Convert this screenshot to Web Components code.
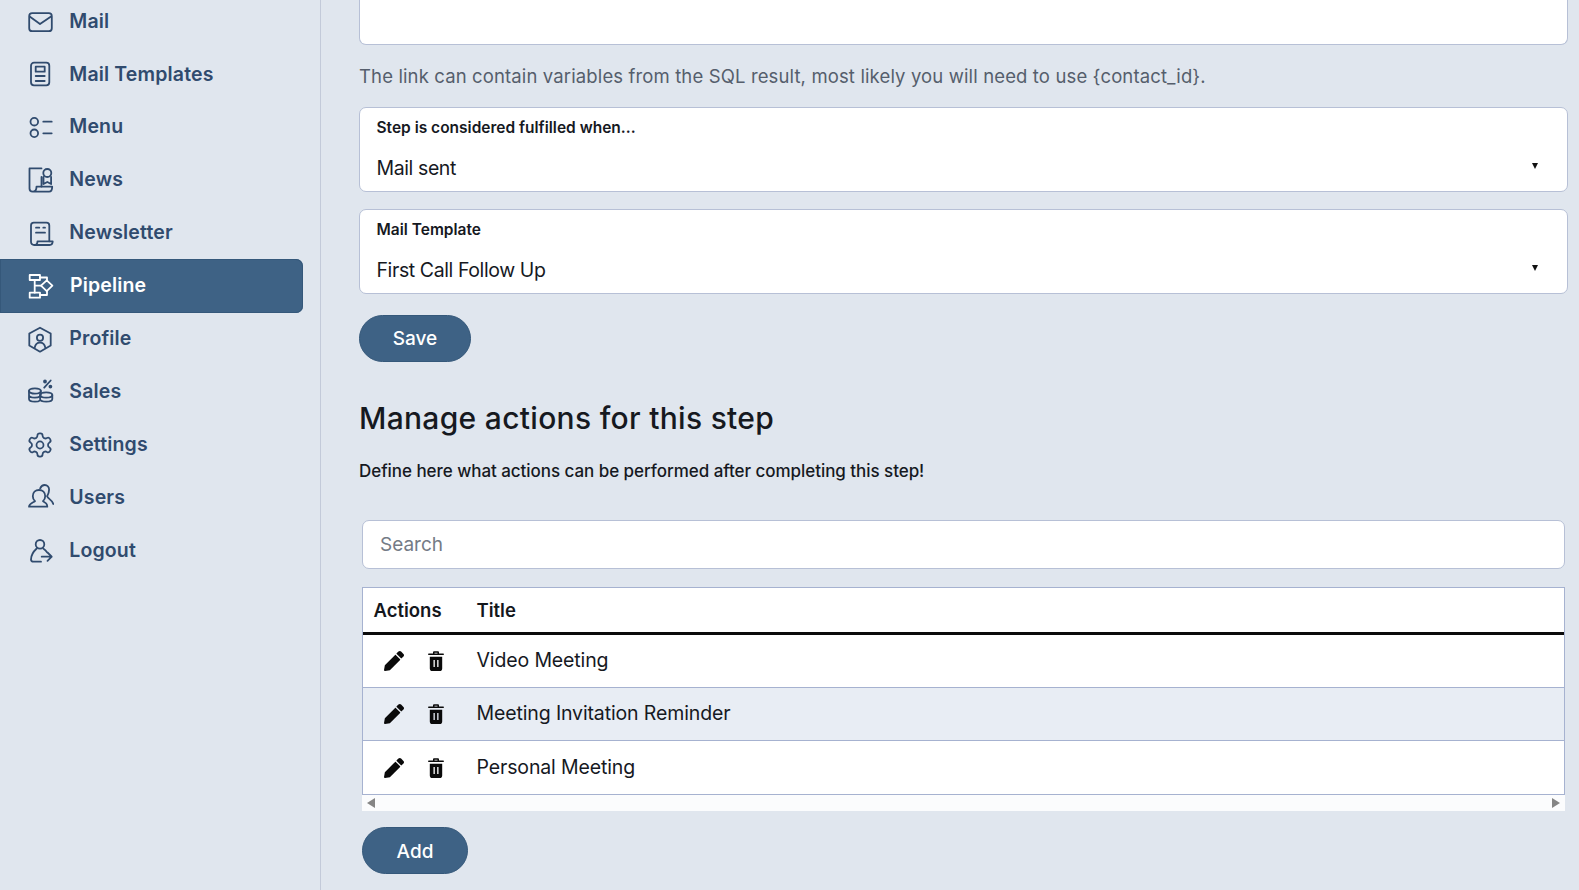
<!DOCTYPE html>
<html lang="en"><head><meta charset="utf-8"><title>Pipeline</title>
<style>
html,body{margin:0;height:890px;overflow:hidden;background:#e0e6ee;font-family:Inter,"Noto Sans",sans-serif}
app-shell{height:890px}
</style></head><body>
<app-shell>
  <app-sidebar slot="side">
    <nav-item icon="mail">Mail</nav-item>
    <nav-item icon="templates">Mail Templates</nav-item>
    <nav-item icon="menu">Menu</nav-item>
    <nav-item icon="news">News</nav-item>
    <nav-item icon="newsletter">Newsletter</nav-item>
    <nav-item icon="pipeline" active>Pipeline</nav-item>
    <nav-item icon="profile">Profile</nav-item>
    <nav-item icon="sales">Sales</nav-item>
    <nav-item icon="settings">Settings</nav-item>
    <nav-item icon="users">Users</nav-item>
    <nav-item icon="logout">Logout</nav-item>
  </app-sidebar>
  <step-form>
    <text-box></text-box>
    <help-text>The link can contain variables from the SQL result, most likely you will need to use {contact_id}.</help-text>
    <select-field label="Step is considered fulfilled when...">Mail sent</select-field>
    <select-field label="Mail Template" style="margin-top:17.5px">First Call Follow Up</select-field>
    <pill-button style="margin-top:21px;width:112px">Save</pill-button>
    <section-head heading="Manage actions for this step">Define here what actions can be performed after completing this step!</section-head>
    <search-box>Search</search-box>
    <actions-table>
      <action-row>Video Meeting</action-row>
      <action-row alt>Meeting Invitation Reminder</action-row>
      <action-row>Personal Meeting</action-row>
    </actions-table>
    <pill-button style="margin:15.5px 0 0 3px;width:106px">Add</pill-button>
  </step-form>
</app-shell>
<script>
const ICONS={
mail:'<rect x="3.2" y="6.2" width="22.6" height="18" rx="3"/><path d="M4 9.7l10 7.3 10.7-7.3"/>',
templates:'<rect x="5" y="2.7" width="18.3" height="22.6" rx="3"/><rect x="9.7" y="6.7" width="9" height="5"/><path d="M9.7 16h9M9.7 21h9"/>',
menu:'<circle cx="8.3" cy="8.7" r="3.8"/><circle cx="8.3" cy="20.3" r="3.8"/><path d="M17.3 8.7h8.4M17.3 20.3h8.4"/>',
news:'<path d="M15.500 2.400H3.500V22.500c0 2 1.200 3.200 3.200 3.200h16.300c2 0 3.200-1.500 3.200-5H10.500c0 3.500-1.500 5-3.800 5"/><circle cx="21.300" cy="7" r="4"/><path d="M17.500 11v7l3.800-2 3.800 2v-7M15.500 11v9.500"/>',
newsletter:'<path d="M8.500 26c-2.200 0-3.500-1.300-3.500-3.200V6.500c0-1.700 1-2.800 2.800-2.800h12.700c1.800 0 2.800 1 2.800 2.800v15.800"/><path d="M8.500 26c2 0 3-1.500 3-3.700h15.200c0 2.400-1.200 3.700-3.200 3.700z"/><path d="M10 8.700h3.300M17.300 8.700H19M10 13.700h9"/>',
pipeline:'<rect x="3.700" y="3" width="10.300" height="5"/><rect x="3.700" y="20.700" width="10.300" height="5"/><path d="M14 5.500h7v3M8.700 8v12.700M8.700 13.700h6M14 23h7v-3.700"/><path d="M20.700 8.300l5.700 5.400-5.700 5.400-5.700-5.400z"/>',
profile:'<path d="M14 2.700l10.700 5.800v12L14 26.700 3.300 20.500v-12z"/><circle cx="14" cy="12.700" r="3.100"/><path d="M8.700 22.600c.6-3.400 2.700-5 5.300-5s4.700 1.600 5.300 5"/>',
sales:'<ellipse cx="8.900" cy="13" rx="5.900" ry="2.700"/><path d="M3 13v8c0 1.500 2.600 2.700 5.900 2.700 2.200 0 4.200-.5 5.200-1.400M3 17c0 1.500 2.600 2.700 5.900 2.700 2 0 3.800-.4 5-1.200M14.800 13v4"/><ellipse cx="20.200" cy="17" rx="6.100" ry="2.700"/><path d="M14.100 17v4c0 1.500 2.700 2.700 6.100 2.700s6.100-1.200 6.100-2.700v-4M24.700 2.500l-6.500 7.200"/><circle cx="19" cy="3.500" r="1"/><circle cx="24.400" cy="8.600" r="1"/>',
settings:'<g transform="translate(14 14) scale(1.17) translate(-12 -12)" stroke-width="1.500"><path d="M12.220 2h-.44a2 2 0 0 0-2 2v.18a2 2 0 0 1-1 1.730l-.43.25a2 2 0 0 1-2 0l-.15-.08a2 2 0 0 0-2.730.73l-.22.38a2 2 0 0 0 .73 2.730l.15.1a2 2 0 0 1 1 1.720v.51a2 2 0 0 1-1 1.740l-.15.09a2 2 0 0 0-.73 2.730l.22.38a2 2 0 0 0 2.730.73l.15-.08a2 2 0 0 1 2 0l.43.25a2 2 0 0 1 1 1.730V20a2 2 0 0 0 2 2h.44a2 2 0 0 0 2-2v-.18a2 2 0 0 1 1-1.730l.43-.25a2 2 0 0 1 2 0l.15.08a2 2 0 0 0 2.730-.73l.22-.39a2 2 0 0 0-.73-2.730l-.15-.08a2 2 0 0 1-1-1.740v-.5a2 2 0 0 1 1-1.740l.15-.09a2 2 0 0 0 .73-2.730l-.22-.38a2 2 0 0 0-2.730-.73l-.15.08a2 2 0 0 1-2 0l-.43-.25a2 2 0 0 1-1-1.730V4a2 2 0 0 0-2-2z"/><circle cx="12" cy="12" r="3"/></g>',
users:'<path d="M3 23.700c.2-3 3-3.700 6-5.500-1.500-1.500-2.200-3-2.200-5 0-3.600 2.600-6.200 6.200-6.200s6.200 2.600 6.200 6.200c0 2-.7 3.500-2.200 5 3 1.800 4.100 2.500 4.300 5.500z"/><path d="M14.200 5.300c.8-2 2.500-3.300 4.500-3.300 2.600 0 4.400 2 4.400 4.800 0 2.700-1 4.600-2 6.400.8 2.800 5 3.300 6.200 7.800"/>',
logout:'<circle cx="14" cy="8.300" r="4.300"/><path d="M10.700 12.500C8 15 5 19.500 5 23.500c0 1.500 1 2.200 2.500 2.200H15M17.500 12.700c1.500 1 2.700 2.300 3.700 3.800M15.700 20.700h10M21.500 16.500l4.200 4.200-4.200 4.200"/>'
};
function def(name,html,init){customElements.define(name,class extends HTMLElement{
  constructor(){super();this.attachShadow({mode:'open'}).innerHTML=html}
  connectedCallback(){init&&init.call(this,this.shadowRoot)}
})}
def('app-shell',`<style>:host{display:flex;align-items:stretch}
::slotted([slot=side]){flex:none}</style><slot name="side"></slot><slot></slot>`);
def('app-sidebar',`<style>:host{display:block;box-sizing:border-box;width:321px;height:890px;border-right:1.5px solid #c3cad9;overflow:hidden;background:#e0e6ee}
.list{display:flex;flex-direction:column;margin-top:-5px;padding-right:17.5px}</style><div class="list"><slot></slot></div>`);
def('nav-item',`<style>:host{display:flex;align-items:center;height:52.9px;padding-left:26px;gap:15.3px;color:#304b6e;font:600 19.5px/1 Inter,sans-serif;letter-spacing:.15px;box-sizing:border-box;border-radius:0 7px 7px 0}
:host([active]){background:#3e6285;color:#fff;height:54px;box-shadow:inset 0 0 0 1px #35587a;padding-left:26px;gap:16px;margin-top:-.5px;margin-bottom:-.6px}
svg{width:28px;height:28px;flex:none;fill:none;stroke:currentColor;stroke-width:1.8;stroke-linecap:round;stroke-linejoin:round}</style><svg viewBox="0 0 28 28" aria-hidden="true"></svg><slot></slot>`,
function(r){r.querySelector('svg').innerHTML=ICONS[this.getAttribute('icon')]});
def('step-form',`<style>:host{display:flex;flex-direction:column;align-items:stretch;box-sizing:border-box;width:1258px;padding:0 11px 0 38px;height:890px;overflow:hidden;flex:none}</style><slot></slot>`);
def('text-box',`<style>:host{display:block;height:45px;background:#fff;box-sizing:border-box;border:1.5px solid #b7c0d6;border-top:0;border-radius:0 0 7px 7px}</style>`);
def('help-text',`<style>:host{display:flex;align-items:center;height:62px;color:#555e6c;font:400 18.5px/1 Inter,sans-serif;letter-spacing:.13px}</style><slot></slot>`);
def('select-field',`<style>:host{display:block;position:relative;height:84.5px;box-sizing:border-box;background:#fff;border:1.5px solid #b7c0d6;border-radius:7px;padding:0 16.5px;color:#16191f}
.l{font:600 15.5px/1 Inter,sans-serif;padding-top:12px;height:32px;box-sizing:border-box}
.v{font:400 19.5px/1 Inter,sans-serif;padding-top:18.5px;letter-spacing:-.4px}
.a{position:absolute;right:29px;top:54.5px;width:0;height:0;border:3.5px solid transparent;border-top:6px solid #111;border-bottom:0}</style><div class="l"></div><div class="v"><slot></slot></div><div class="a"></div>`,
function(r){r.querySelector('.l').textContent=this.getAttribute('label')});
def('pill-button',`<style>:host{display:flex;align-items:center;justify-content:center;height:47.5px;box-sizing:border-box;background:#3e6285;border:1px solid #35587a;color:#fff;font:500 19px/1 Inter,sans-serif;border-radius:24px;align-self:flex-start;padding-top:1px}</style><slot></slot>`);
def('section-head',`<style>:host{display:block}
h2{margin:0;height:56px;display:flex;align-items:center;margin-top:28px;font:500 30px/1 Inter,sans-serif;color:#16191f;letter-spacing:.3px}
p{margin:0;padding-top:10px;display:flex;align-items:center;height:30px;font:500 17px/1 Inter,sans-serif;color:#16191f;letter-spacing:-.05px}</style><h2></h2><p><slot></slot></p>`,
function(r){r.querySelector('h2').textContent=this.getAttribute('heading')});
def('search-box',`<style>:host{display:flex;align-items:center;margin:34px 3px 0 3px;height:49px;box-sizing:border-box;background:#fff;border:1.5px solid #b7c0d6;border-radius:7px;padding:0 17px;color:#747b86;font:400 19px/1 Inter,sans-serif}</style><slot></slot>`);
def('actions-table',`<style>:host{display:block;margin:18px 3px 0 3px}
.t{border:1.5px solid #a6b2d0;border-bottom:0;background:#fff}
.h{display:grid;grid-template-columns:103px 1fr;align-items:center;height:43.5px;border-bottom:3px solid #0b0b0b;font:600 18.5px/1 Inter,sans-serif;color:#14171c;padding-left:10.5px}
.s{display:flex;justify-content:space-between;align-items:center;height:16px;background:#fbfcfd;padding:0 5px;border-top:1px solid #a6b2d0}
i{display:block;width:0;height:0;border:5px solid transparent}
.p{border-right:8px solid #858585;border-left:0}.n{border-left:8px solid #858585;border-right:0}</style>
<div class="t"><div class="h"><span>Actions</span><span>Title</span></div><slot></slot></div><div class="s"><i class="p"></i><i class="n"></i></div>`);
def('action-row',`<style>:host{display:grid;grid-template-columns:113.5px 1fr;align-items:center;height:53.3px;box-sizing:border-box;background:#fff;border-bottom:1.5px solid #a6b2d0;font:400 19.5px/1 Inter,sans-serif;color:#16191f;letter-spacing:-.13px}
:host([alt]){background:#e8edf4}
:host(:last-child){border-bottom:0}
.ic{display:flex;align-items:center;gap:24px;padding-left:21px}
svg{display:block;fill:#0a0a0a;flex:none}</style>
<div class="ic"><svg width="20" height="20" viewBox="0 0 512 512" aria-hidden="true"><path d="M497.9 142.1l-46.1 46.1c-4.700 4.700-12.300 4.700-17 0l-111-111c-4.700-4.700-4.700-12.300 0-17l46.100-46.100c18.700-18.700 49.100-18.700 67.900 0l60.100 60.100c18.800 18.700 18.800 49.100 0 67.900zM284.200 99.800L21.600 362.400.400 483.900c-2.900 16.400 11.400 30.600 27.800 27.800l121.500-21.300 262.600-262.600c4.700-4.700 4.700-12.300 0-17l-111-111c-4.800-4.700-12.400-4.700-17.100 0z"/></svg>
<svg width="16" height="20" viewBox="0 0 16 20" aria-hidden="true"><path d="M5 2.500V1.600C5 .8 5.500.3 6.300.3h3.400c.8 0 1.300.5 1.300 1.300v.9h4.200c.5 0 .8.300.8.700s-.3.800-.8.800H.8c-.5 0-.8-.4-.8-.8s.3-.7.800-.7zm1.500 0h3v-.8h-3z"/><path fill-rule="evenodd" d="M1.800 5.800h12.400v11.600c0 1.600-1 2.600-2.500 2.600H4.300c-1.500 0-2.500-1-2.500-2.600zM5.500 9v7h1.300V9zm3.700 0v7h1.300V9z"/></svg></div><div><slot></slot></div>`);
</script>
</body></html>
